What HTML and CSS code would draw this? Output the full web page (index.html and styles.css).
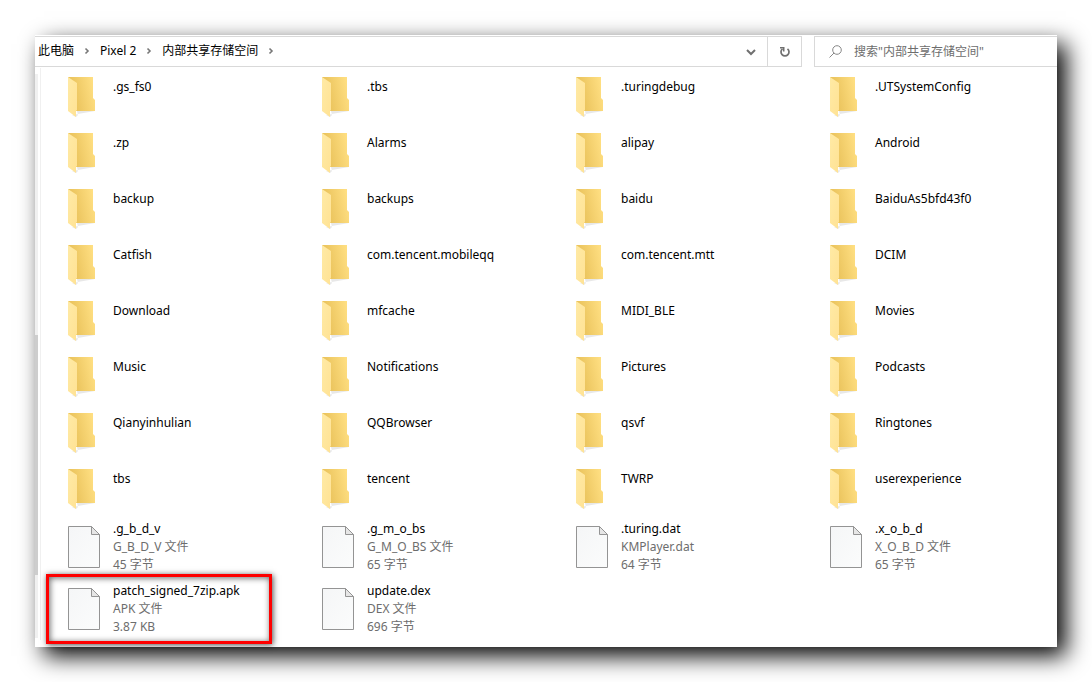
FILE: index.html
```html
<!DOCTYPE html>
<html lang="zh-CN">
<head>
    <meta charset="UTF-8">
    <meta name="viewport" content="width=device-width, initial-scale=1.0">
    <title>内部共享存储空间</title>
    <link rel="stylesheet" href="styles.css">
</head>
<body>
    <!-- shared icons -->
    <svg class="sprite" aria-hidden="true">
        <defs>
            <linearGradient id="folderBack" x1="0.2" y1="0.6" x2="1" y2="0.4">
                <stop offset="0" stop-color="#eac35c"/>
                <stop offset="1" stop-color="#ffdf82"/>
            </linearGradient>
            <linearGradient id="folderFront" x1="0" y1="0" x2="1" y2="1">
                <stop offset="0" stop-color="#ffeaa5"/>
                <stop offset="1" stop-color="#ffe294"/>
            </linearGradient>
            <linearGradient id="paper" x1="0" y1="0" x2="1" y2="1">
                <stop offset="0" stop-color="#f5f6f7"/>
                <stop offset="1" stop-color="#fbfcfc"/>
            </linearGradient>
        </defs>
        <symbol id="folder" viewBox="0 0 32 44">
            <path d="M4 39l4 2 2-2-1-4h18l3-1-3 1z" fill="#e8e8e8"/>
            <path d="M0 1h25v21l2 2v11H5z" fill="url(#folderBack)"/>
            <path d="M0 1l9 6v27l-1 1v6l-8-6z" fill="url(#folderFront)"/>
        </symbol>
        <symbol id="file" viewBox="0 0 32 44">
            <path d="M.5 1.500h23l8 8v33H.5z" fill="url(#paper)" stroke="#949494"/>
            <path d="M23.500 1.500v8h8z" fill="#e6e6e6" stroke="#949494"/>
        </symbol>
        <symbol id="arrow" viewBox="0 0 6 8">
            <path d="M1.500 1.500L4 4 1.500 6.500" fill="none" stroke="#777" stroke-width="1.600"/>
        </symbol>
    </svg>

    <div class="window">
        <header class="toolbar">
            <div class="address">
                <nav class="crumbs">
                    <a href="#">此电脑</a>
                    <svg><use href="#arrow"/></svg>
                    <a href="#">Pixel 2</a>
                    <svg><use href="#arrow"/></svg>
                    <a href="#">内部共享存储空间</a>
                    <svg><use href="#arrow"/></svg>
                </nav>
                <button class="history" aria-label="历史记录">
                    <svg width="10" height="8" viewBox="0 0 10 8"><path d="M1 2l4 4 4-4" fill="none" stroke="#707070" stroke-width="2"/></svg>
                </button>
                <button class="refresh" aria-label="刷新">
                    <svg width="12" height="12" viewBox="0 0 12 12"><path d="M8.500 2.800a4 4 0 1 1-5 0" fill="none" stroke="#707070" stroke-width="1.700"/><path d="M1 1h4.500v4.500H4V2.500H1z" fill="#707070"/></svg>
                </button>
            </div>
            <label class="search">
                <svg width="13" height="13" viewBox="0 0 13 13"><circle cx="8" cy="5" r="4.300" fill="none" stroke="#888"/><path d="M5 8L.5 12.500" stroke="#888"/></svg>
                <input type="text" aria-label="搜索" placeholder='搜索"内部共享存储空间"'>
            </label>
        </header>

        <main class="content">
            <div class="scrollbar"><div class="thumb"></div></div>
            <ul class="files" id="files"></ul>
        </main>
    </div>

    <script src="script.js"></script>
</body>
</html>
```
FILE: styles.css
```css
* {
    box-sizing: border-box;
}
body {
    margin: 0;
    padding: 35px;
    background-color: white;
    color: black;
    font-family: "Noto Sans", "Noto Sans CJK SC", sans-serif;
    font-size: 12px;
    line-height: 18px;
}
button, input {
    font: inherit;
    border: none;
    padding: 0;
    background: none;
}
.sprite {
    position: absolute;
    width: 0;
    height: 0;
}
.window {
    background-color: white;
    box-shadow: 9px 9px 22px #000;
}

/* address bar */
.toolbar {
    display: flex;
    gap: 12px;
    height: 32px;
    padding-top: 1px;
}
.address {
    flex: 1;
    display: flex;
    border: 1px solid #d9d9d9;
    border-left: none;
}
.crumbs {
    flex: 1;
    display: flex;
    align-items: center;
    padding: 0 0 2px 3px;
    gap: 10px;
    white-space: nowrap;
}
.crumbs a {
    color: black;
    text-decoration: none;
}
.crumbs svg {
    width: 6px;
    height: 8px;
}
.history, .refresh {
    display: flex;
    align-items: center;
    justify-content: center;
    width: 33px;
}
.refresh {
    width: 34px;
    border-left: 1px solid #d9d9d9;
}
.search {
    display: flex;
    align-items: center;
    gap: 12px;
    width: 243px;
    padding-left: 14px;
    border: 1px solid #d9d9d9;
    border-right: none;
}
.search input {
    flex: 1;
    min-width: 0;
    outline: none;
}
.search input::placeholder {
    color: #6d6d6d;
    opacity: 1;
}

/* file list */
.content {
    display: flex;
    padding: 1px 0 7px;
}
.scrollbar {
    width: 3px;
    margin: 6px 2px 2px 0;
    background-color: #f0f0f0;
}
.thumb {
    height: 240px;
    margin-top: 261px;
    background-color: #cdcdcd;
}
.files {
    flex: 1;
    display: grid;
    grid-template-columns: repeat(4, 1fr);
    margin: 0;
    padding: 0;
    list-style: none;
    border-left: 1px solid #f0f0f0;
}
.item {
    position: relative;
    display: flex;
    gap: 13px;
    height: 56px;
    padding: 8px 0 0 27px;
    white-space: nowrap;
}
.item svg {
    width: 32px;
    height: 44px;
}
.item .text {
    padding-top: 2px;
}
.item.file {
    height: 62px;
    padding-top: 4px;
}
.file svg {
    margin-top: 5px;
}
.file .text {
    padding-top: 0;
}
.text div + div {
    color: #6d6d6d;
}
.marked::after {
    content: "";
    box-sizing: border-box;
    position: absolute;
    left: 5px;
    top: -4px;
    width: 226px;
    height: 70px;
    border: 3px solid #fe0000;
    box-shadow: 1px 1px 6px rgba(0, 0, 0, 0.7), inset 1px 1px 6px rgba(0, 0, 0, 0.6);
}
```
FILE: script.js
```js
const folders = [
    '.gs_fs0', '.tbs', '.turingdebug', '.UTSystemConfig',
    '.zp', 'Alarms', 'alipay', 'Android',
    'backup', 'backups', 'baidu', 'BaiduAs5bfd43f0',
    'Catfish', 'com.tencent.mobileqq', 'com.tencent.mtt', 'DCIM',
    'Download', 'mfcache', 'MIDI_BLE', 'Movies',
    'Music', 'Notifications', 'Pictures', 'Podcasts',
    'Qianyinhulian', 'QQBrowser', 'qsvf', 'Ringtones',
    'tbs', 'tencent', 'TWRP', 'userexperience'
];

const files = [
    ['.g_b_d_v', 'G_B_D_V 文件', '45 字节'],
    ['.g_m_o_bs', 'G_M_O_BS 文件', '65 字节'],
    ['.turing.dat', 'KMPlayer.dat', '64 字节'],
    ['.x_o_b_d', 'X_O_B_D 文件', '65 字节'],
    ['patch_signed_7zip.apk', 'APK 文件', '3.87 KB'],
    ['update.dex', 'DEX 文件', '696 字节']
];

function addItem(icon, className, lines) {
    const li = document.createElement('li');
    li.className = className;
    li.innerHTML = `<svg><use href="#${icon}"/></svg><div class="text">` +
        lines.map(line => `<div>${line}</div>`).join('') + '</div>';
    document.getElementById('files').appendChild(li);
}

folders.forEach(name => addItem('folder', 'item', [name]));
files.forEach(lines => {
    const marked = lines[0].endsWith('.apk') ? ' marked' : '';
    addItem('file', 'item file' + marked, lines);
});
```
